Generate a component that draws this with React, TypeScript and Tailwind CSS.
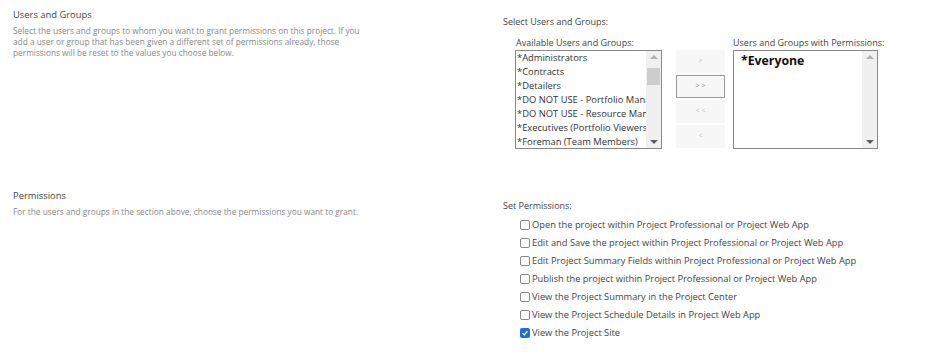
import React from 'react';

const available = [
  '*Administrators',
  '*Contracts',
  '*Detailers',
  '*DO NOT USE - Portfolio Managers',
  '*DO NOT USE - Resource Managers',
  '*Executives (Portfolio Viewers)',
  '*Foreman (Team Members)',
];

const permissions = [
  { label: 'Open the project within Project Professional or Project Web App', checked: false },
  { label: 'Edit and Save the project within Project Professional or Project Web App', checked: false },
  { label: 'Edit Project Summary Fields within Project Professional or Project Web App', checked: false },
  { label: 'Publish the project within Project Professional or Project Web App', checked: false },
  { label: 'View the Project Summary in the Project Center', checked: false },
  { label: 'View the Project Schedule Details in Project Web App', checked: false },
  { label: 'View the Project Site', checked: true },
];

function ScrollBar({ thumb }: { thumb?: boolean }) {
  return (
    <div className="w-[15px] h-full bg-[#f0f0f0] flex flex-col items-center justify-between py-[4px]">
      <div className="w-0 h-0 border-l-[4px] border-r-[4px] border-b-[4px] border-l-transparent border-r-transparent border-b-[#b0b0b0]" />
      {thumb && <div className="absolute top-[17px] w-[13px] h-[17px] bg-[#cdcdcd]" />}
      <div className="w-0 h-0 border-l-[4px] border-r-[4px] border-t-[4px] border-l-transparent border-r-transparent border-t-[#606060]" />
    </div>
  );
}

function MoveButton({ label, active }: { label: string; active?: boolean }) {
  return (
    <div
      className={`h-[23px] w-[49px] flex items-center justify-center text-[7px] bg-[#f7f7f7] ${
        active ? 'border border-[#999] text-[#888]' : 'border border-[#f7f7f7] text-[#bbb]'
      }`}
    >
      {label}
    </div>
  );
}

export default function App() {
  return (
    <div className="w-[936px] h-[353px] bg-white overflow-hidden font-['Open_Sans',sans-serif] text-[#444]">
      {/* users and groups */}
      <div className="flex h-[185px]">
        <div className="w-[490px] pl-[13px] pt-[8px]">
          <h2 className="text-[9.4px] leading-[14px] text-[#444]">Users and Groups</h2>
          <p className="mt-[3px] text-[8.3px] leading-[11px] text-[#888] w-[360px]">
            Select the users and groups to whom you want to grant permissions on this project. If you add a user or
            group that has been given a different set of permissions already, those permissions will be reset to the
            values you choose below.
          </p>
        </div>
        <div className="pl-[13px] pt-[15px]">
          <div className="text-[9px] leading-[14px] text-[#444]">Select Users and Groups:</div>
          <div className="flex mt-[7px] pl-[12px]">
            <div>
              <div className="text-[9px] leading-[14px] pl-[1px] text-[#444]">Available Users and Groups:</div>
              <div className="w-[147px] h-[99px] border border-[#888] flex">
                <div className="flex-1 overflow-hidden pl-[1px]">
                  {available.map((a) => (
                    <div key={a} className="text-[9.4px] leading-[14px] whitespace-nowrap text-[#333]">
                      {a}
                    </div>
                  ))}
                </div>
                <div className="relative flex">
                  <ScrollBar thumb />
                </div>
              </div>
            </div>
            <div className="flex flex-col gap-[2px] ml-[14px] mt-[14px]">
              <MoveButton label=">" />
              <MoveButton label="> >" active />
              <MoveButton label="< <" />
              <MoveButton label="<" />
            </div>
            <div className="ml-[8px]">
              <div className="text-[9px] leading-[14px] text-[#444] whitespace-nowrap">
                Users and Groups with Permissions:
              </div>
              <div className="w-[145px] h-[99px] border border-[#888] flex">
                <div className="flex-1 pl-[7px] pt-[1px] text-[12.3px] leading-[18px] font-bold text-[#111]">*Everyone</div>
                <div className="relative flex">
                  <ScrollBar />
                </div>
              </div>
            </div>
          </div>
        </div>
      </div>

      {/* permissions */}
      <div className="flex">
        <div className="w-[490px] pl-[13px] pt-[4px]">
          <h2 className="text-[9.4px] leading-[14px] text-[#444]">Permissions</h2>
          <p className="mt-[3px] text-[8.3px] leading-[11px] text-[#888]">
            For the users and groups in the section above, choose the permissions you want to grant.
          </p>
        </div>
        <div className="pl-[13px] pt-[14px]">
          <div className="text-[9px] leading-[14px] text-[#444]">Set Permissions:</div>
          <div className="pl-[17px] pt-[3px]">
            {permissions.map((p) => (
              <label key={p.label} className="flex items-center h-[18px] text-[9.3px] text-[#444] whitespace-nowrap">
                {p.checked ? (
                  <span className="w-[10px] h-[10px] rounded-[2px] bg-[#1e6fd0] flex items-center justify-center mr-[2px]">
                    <svg viewBox="0 0 10 10" className="w-[8px] h-[8px]">
                      <path d="M2 5.2 L4.2 7.3 L8 2.8" fill="none" stroke="white" strokeWidth="1.6" />
                    </svg>
                  </span>
                ) : (
                  <span className="w-[10px] h-[10px] rounded-[2px] border border-[#888] bg-white mr-[2px]" />
                )}
                {p.label}
              </label>
            ))}
          </div>
        </div>
      </div>
    </div>
  );
}
